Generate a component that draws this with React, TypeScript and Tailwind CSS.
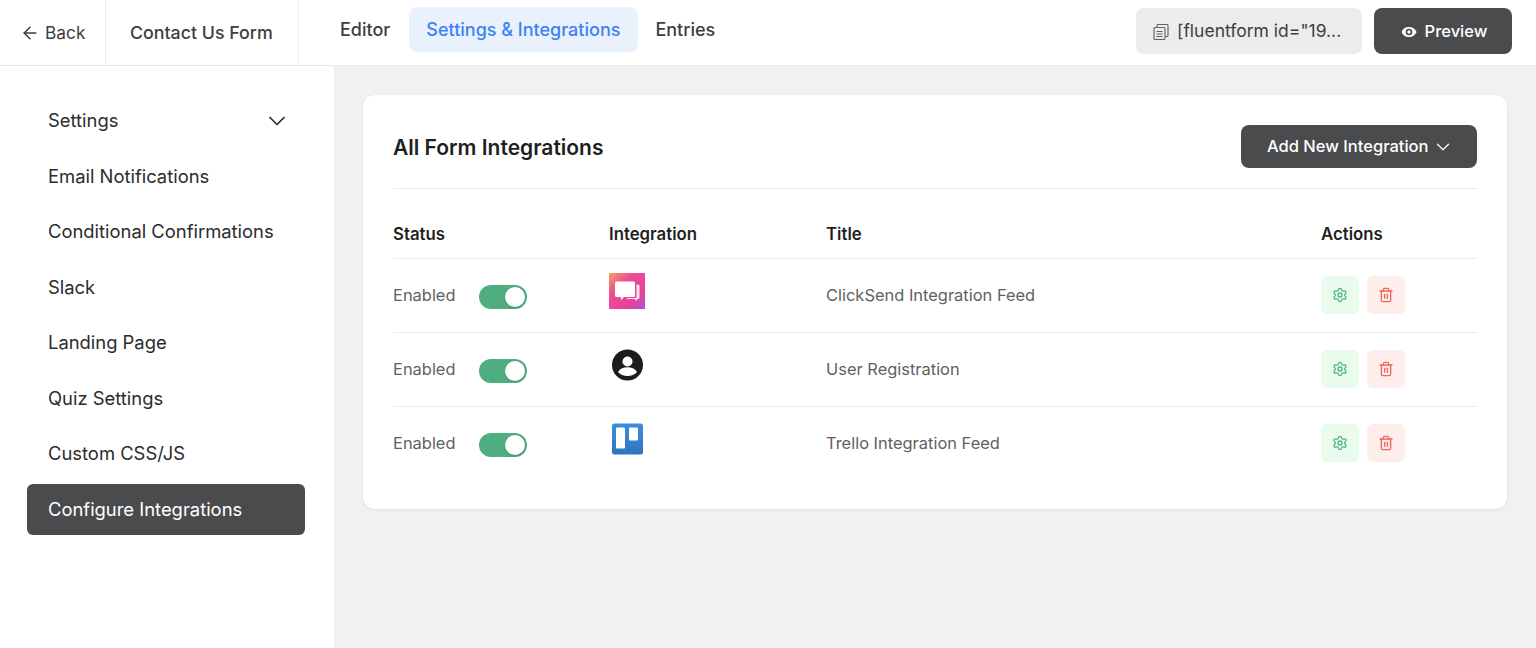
import { ArrowLeft, ChevronDown, Eye, Settings, Trash2 } from 'lucide-react';

const sideItems = [
  'Settings',
  'Email Notifications',
  'Conditional Confirmations',
  'Slack',
  'Landing Page',
  'Quiz Settings',
  'Custom CSS/JS',
  'Configure Integrations',
];

function ClickSendLogo() {
  return (
    <svg width="36" height="36" viewBox="0 0 36 36">
      <defs>
        <linearGradient id="cs" x1="0" y1="0" x2="1" y2="1">
          <stop offset="0" stopColor="#f5a25d" />
          <stop offset="0.32" stopColor="#ec4f8f" />
          <stop offset="0.75" stopColor="#e83fa0" />
          <stop offset="1" stopColor="#a55bd6" />
        </linearGradient>
      </defs>
      <rect width="36" height="36" fill="url(#cs)" />
      <path d="M27.500 11.500h1.500a1.500 1.500 0 0 1 1.500 1.500v11.500a1.500 1.500 0 0 1-1.500 1.500h-1v2L25 26h-7v-1h8a1.500 1.500 0 0 0 1.500-1.500z" fill="#fff" fillOpacity="0.85" />
      <path d="M7.500 8.500h17a1.500 1.500 0 0 1 1.500 1.500v12.500a1.500 1.500 0 0 1-1.500 1.500H15l-3 3v-3H7.500A1.500 1.500 0 0 1 6 22.500V10a1.500 1.500 0 0 1 1.500-1.500z" fill="#fff" />
    </svg>
  );
}

function UserLogo() {
  return (
    <svg width="32" height="32" viewBox="0 0 32 32">
      <circle cx="16.500" cy="16" r="15.500" fill="#1b1c1e" />
      <circle cx="16.500" cy="12.500" r="5" fill="#fff" />
      <path d="M7 23c2-3.400 5.600-4.800 9.500-4.800s7.500 1.400 9.500 4.800c-2.200 2.500-5.600 4-9.500 4s-7.300-1.500-9.500-4z" fill="#fff" />
    </svg>
  );
}

function TrelloLogo() {
  return (
    <svg width="32" height="32" viewBox="0 0 32 32">
      <defs>
        <linearGradient id="tr" x1="0" y1="0" x2="0" y2="1">
          <stop offset="0" stopColor="#3b8fdc" />
          <stop offset="1" stopColor="#2f74bd" />
        </linearGradient>
      </defs>
      <rect x="1" y="0.500" width="31" height="31" rx="2.500" fill="url(#tr)" />
      <rect x="5" y="4.500" width="9" height="21" rx="1" fill="#fff" />
      <rect x="18" y="4.500" width="9" height="13" rx="1" fill="#fff" />
    </svg>
  );
}

function CopyIcon() {
  return (
    <svg width="16" height="16" viewBox="0 0 16 16" fill="none" stroke="#5f6063" strokeWidth="1.100">
      <rect x="1" y="3.500" width="11" height="12" rx="1" />
      <path d="M4 3.500V1.500a1 1 0 0 1 1-1h9a1 1 0 0 1 1 1v10a1 1 0 0 1-1 1h-2" />
      <path d="M3.500 7.500h6M3.500 10h6M3.500 12.500h6" />
    </svg>
  );
}

const rows = [
  { logo: <ClickSendLogo />, title: 'ClickSend Integration Feed' },
  { logo: <UserLogo />, title: 'User Registration' },
  { logo: <TrelloLogo />, title: 'Trello Integration Feed' },
];

function Toggle() {
  return (
    <div className="mt-0.5 flex h-6 w-12 items-center justify-end rounded-full bg-[#4fad7f] pr-0.5">
      <div className="h-5 w-5 rounded-full bg-white shadow-sm" />
    </div>
  );
}

export default function App() {
  return (
    <div className="flex h-[648px] w-[1536px] flex-col overflow-hidden bg-[#f1f1f1] font-['Inter',sans-serif] text-[#1e1f21]">
      {/* Top bar */}
      <header className="flex h-[66px] shrink-0 items-stretch border-b border-[#e8e8e8] bg-white">
        <div className="flex w-[106px] items-center gap-[5px] border-r border-[#ececec] pl-5 text-[17.300px] text-[#3d3e40]">
          <ArrowLeft className="h-5 w-5" strokeWidth={1.800} />
          Back
        </div>
        <div className="flex w-[193px] items-center border-r border-[#ececec] pl-6 pt-0.5 text-[17.800px] font-medium text-[#3d3e40]">
          Contact Us Form
        </div>
        <nav className="ml-[24px] flex items-center gap-0 pb-[7px] text-[18px] font-medium text-[#3d3e40]">
          <span className="pl-[17px] pr-[19px]">Editor</span>
          <span className="flex h-[45px] items-center rounded-lg bg-[#e9f1fd] pl-[17px] pr-[18px] text-[#3f81f5]">Settings &amp; Integrations</span>
          <span className="pl-[17px] pr-[18px]">Entries</span>
        </nav>
        <div className="ml-auto flex items-center gap-3 pb-1 pr-6">
          <div className="flex h-[46px] w-[226px] items-center gap-2 rounded-lg bg-[#ececec] pl-[17px] pt-0.5 text-[17.500px] text-[#3d3e40]">
            <CopyIcon />
            [fluentform id="19...
          </div>
          <div className="flex h-[46px] w-[138px] items-center justify-center gap-[6px] rounded-lg bg-[#4a4b4d] pt-0.5 text-[16.500px] font-medium text-white">
            <Eye className="h-5 w-5 fill-white stroke-[#4a4b4d]" strokeWidth={2} />
            Preview
          </div>
        </div>
      </header>

      <div className="flex min-h-0 flex-1">
        {/* Side menu */}
        <aside className="w-[335px] shrink-0 border-r border-[#ececec] bg-white pl-[27px] pr-[29px] pt-[29.500px]">
          <ul className="flex flex-col gap-[4.500px] text-[18.400px] text-[#2b2c2e]">
            {sideItems.map((item, i) => (
              <li
                key={item}
                className={`flex h-[51px] items-center justify-between rounded-md pl-[21px] pr-[14px] ${
                  i === sideItems.length - 1 ? 'bg-[#4a4b4d] text-white' : ''
                }`}
              >
                {item}
                {i === 0 && <ChevronDown className="h-7 w-7" strokeWidth={1.500} />}
              </li>
            ))}
          </ul>
        </aside>

        {/* Main */}
        <main className="min-w-0 flex-1 pl-7 pr-[29px] pt-[29px]">
          <section className="rounded-xl bg-white px-[30px] pb-[29px] pt-[30px] shadow-[0_1px_3px_rgba(0,0,0,0.08)]">
            <div className="flex h-[64px] items-start justify-between border-b border-[#ececec]">
              <h2 className="mt-[9px] text-[21px] font-semibold leading-7 text-[#1e1f21]">All Form Integrations</h2>
              <div className="flex h-[43px] w-[236px] items-center gap-1 rounded-lg bg-[#4a4b4d] pl-[26px] text-[16.500px] font-medium text-white">
                Add New Integration
                <ChevronDown className="h-[22px] w-[22px]" strokeWidth={1.300} />
              </div>
            </div>

            <div className="grid h-[70px] grid-cols-[216px_217px_495px_1fr] items-center border-b border-[#ececec] pt-[22px] text-[16.800px] font-semibold">
              <span>Status</span>
              <span>Integration</span>
              <span>Title</span>
              <span>Actions</span>
            </div>

            {rows.map((row, i) => (
              <div
                key={row.title}
                className={`grid grid-cols-[216px_217px_495px_1fr] items-center text-[16.450px] text-[#606164] ${
                  i < rows.length - 1 ? 'h-[74px] border-b border-[#ececec]' : 'h-[73px]'
                }`}
              >
                <div className="flex items-center gap-[23px]">
                  <span>Enabled</span>
                  <Toggle />
                </div>
                <div className="-mt-[10px] flex h-9 w-9 items-center justify-center">{row.logo}</div>
                <span>{row.title}</span>
                <div className="-mt-[2px] flex gap-2">
                  <div className="flex h-[38px] w-[38px] items-center justify-center rounded-md bg-[#e9fbec]">
                    <Settings className="h-4 w-4 text-[#4fb583]" strokeWidth={2} />
                  </div>
                  <div className="flex h-[38px] w-[38px] items-center justify-center rounded-md bg-[#fdeeec]">
                    <Trash2 className="h-4 w-4 text-[#f2675a]" strokeWidth={2} />
                  </div>
                </div>
              </div>
            ))}
          </section>
        </main>
      </div>
    </div>
  );
}
